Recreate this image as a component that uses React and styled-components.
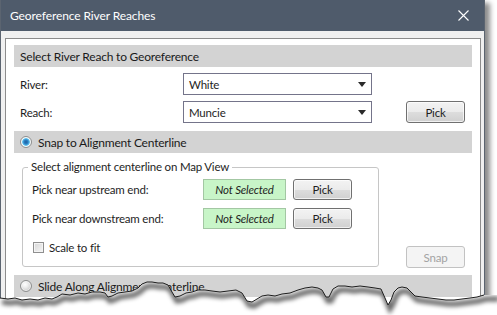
import React from 'react';
import styled, { createGlobalStyle } from 'styled-components';

const GlobalStyle = createGlobalStyle`
  html, body { margin: 0; padding: 0; background: #fff; overflow: hidden; }
  body { font-family: Lato, "Noto Sans", sans-serif; font-size: 11.5px; letter-spacing: -0.2px; color: #1e1e1e; }
`;

const Stage = styled.div`
  position: relative;
  width: 497px;
  height: 315px;
  overflow: hidden;
  background: #fff;
`;

const Window = styled.div`
  width: 485px;
  box-sizing: border-box;
  border: 1px solid #5b6470;
  border-top: none;
  background: #f0f0f0;
  box-shadow: 5px 3px 5px rgba(0, 0, 0, 0.45);
`;

const TitleBar = styled.div`
  height: 31px;
  background: #4f5b6b;
  color: #fff;
  display: flex;
  align-items: center;
  justify-content: space-between;
  padding: 0 15px 0 9px;
  font-size: 12px;
  letter-spacing: -0.1px;
`;

const CloseIcon = () => (
  <svg width="11" height="11" viewBox="0 0 11 11">
    <path d="M0.5 0.5 L10.5 10.5 M10.5 0.5 L0.5 10.5" stroke="#fff" strokeWidth="1.1" />
  </svg>
);

const Body = styled.div`
  padding: 7px 3px 0 4px;
`;

const Panel = styled.div`
  border: 1px solid #8c8c8c;
  background: #fff;
  padding: 6px 8px 40px 8px;
  display: flex;
  flex-direction: column;
`;

const SectionHeader = styled.div`
  height: 22px;
  background: #d3d3d3;
  display: flex;
  align-items: center;
  gap: 6px;
  padding: 0 6px;
  margin-top: ${(p) => p.$mt || 0}px;
  color: #1a1a1a;
  font-size: 12px;
`;

const Radio = styled.span`
  width: 12px;
  height: 12px;
  box-sizing: border-box;
  border-radius: 50%;
  border: 1px solid #8e8f8f;
  background: ${(p) =>
    p.$checked
      ? 'radial-gradient(circle at 50% 50%, #1d5f9c 0, #2a7fc4 2px, #5fc2ee 3.5px, #e8f3f8 4.2px, #f4f4f4 6px)'
      : 'radial-gradient(circle at 40% 35%, #ffffff 0, #ececec 3px, #d2d2d2 6px)'};
  box-shadow: inset 0 0 0 1px rgba(255, 255, 255, 0.6);
`;

const FieldRow = styled.div`
  display: grid;
  grid-template-columns: 169px 189px 34px 59px;
  align-items: center;
  margin-top: 6px;
  height: 22px;
`;

const Label = styled.span`
  padding-left: ${(p) => p.$indent || 0}px;
  color: #1e1e1e;
`;

const Combo = styled.div`
  height: 22px;
  box-sizing: border-box;
  border: 1px solid #74748a;
  background: #fff;
  display: flex;
  align-items: center;
  justify-content: space-between;
  padding: 0 5px 0 5px;
`;

const Arrow = () => (
  <svg width="8" height="5" viewBox="0 0 8 5">
    <path d="M0 0 H8 L4 5 Z" fill="#2a2a2a" />
  </svg>
);

const Button = styled.button`
  grid-column: ${(p) => p.$col || 'auto'};
  width: 59px;
  height: ${(p) => p.$h || 22}px;
  box-sizing: border-box;
  border: 1px solid ${(p) => (p.disabled ? '#c2c2c2' : '#707070')};
  border-radius: 3px;
  background: ${(p) =>
    p.disabled
      ? '#f4f4f4'
      : 'linear-gradient(to bottom, #f3f3f3 0%, #ebebeb 50%, #dddddd 51%, #d0d0d0 100%)'};
  box-shadow: ${(p) => (p.disabled ? 'none' : 'inset 0 0 0 1px rgba(255,255,255,0.7)')};
  font-family: inherit;
  font-size: 11.5px;
  letter-spacing: -0.2px;
  color: ${(p) => (p.disabled ? '#a3a3a3' : '#1e1e1e')};
  padding: 0;
  margin: 0;
`;

const SnapSection = styled.div`
  display: flex;
  margin-top: 7px;
  padding-left: 8px;
`;

const GroupBox = styled.fieldset`
  margin: 0;
  width: 357px;
  box-sizing: border-box;
  padding: 5px 9px 12px 9px;
  border: 1px solid #c6c6c6;
  border-radius: 3px;
  min-width: 0;
`;

const Legend = styled.legend`
  padding: 0 3px;
  margin-left: -4px;
  line-height: 14px;
  font-size: 11.5px;
  color: #1e1e1e;
`;

const PickRow = styled.div`
  display: grid;
  grid-template-columns: 171px 83px 7px 59px;
  align-items: center;
  height: 21px;
  margin-top: ${(p) => p.$mt || 0}px;
`;

const StatusBox = styled.div`
  height: 21px;
  box-sizing: border-box;
  border: 1px solid #a3c7a3;
  background: #c8f5c8;
  display: flex;
  align-items: center;
  justify-content: center;
  font-style: italic;
  color: #1e1e1e;
`;

const CheckRow = styled.label`
  display: flex;
  align-items: center;
  gap: 5px;
  height: 13px;
  margin-top: 12px;
  padding-left: 1px;
`;

const CheckBox = styled.span`
  width: 11px;
  height: 11px;
  box-sizing: border-box;
  border: 1px solid #8f8f8f;
  background: linear-gradient(to bottom right, #d6d6d6, #f6f6f6);
  box-shadow: inset 0 0 0 1px #f4f4f4;
`;

const SideColumn = styled.div`
  display: flex;
  flex-direction: column;
  justify-content: flex-end;
  margin-left: 27px;
  margin-bottom: -1px;
`;

const TornOverlay = styled.svg`
  position: absolute;
  left: 0;
  top: 270px;
  width: 497px;
  height: 45px;
  pointer-events: none;
`;

const edge = [
  [0, 298], [8, 299], [15, 298], [22, 300], [30, 299], [38, 300], [45, 298], [52, 299],
  [57, 297], [62, 294], [70, 295], [78, 293], [85, 294], [92, 292], [100, 292], [105, 293],
  [108, 297], [112, 296], [118, 293], [125, 292], [132, 291], [138, 288], [142, 284],
  [147, 282], [152, 282], [158, 283], [163, 283], [168, 285], [172, 292], [175, 297],
  [180, 296], [186, 293], [192, 292], [198, 290], [205, 290], [212, 291], [220, 292],
  [228, 291], [236, 290], [242, 293], [247, 301], [252, 302], [257, 299], [262, 296],
  [268, 295], [275, 296], [282, 294], [290, 293], [298, 290], [305, 288], [312, 287],
  [318, 288], [322, 290], [326, 297], [329, 297], [333, 289], [338, 286], [345, 286],
  [352, 287], [360, 286], [368, 287], [375, 288], [381, 289], [385, 298], [388, 305],
  [391, 300], [394, 292], [398, 288], [402, 287], [407, 288], [411, 292], [415, 296],
  [422, 297], [430, 298], [438, 299], [446, 300], [454, 300], [462, 299], [470, 298],
  [477, 297], [484, 295],
];

const TornEdge = () => {
  const line = edge.map(([x, y]) => `${x},${y - 270}`).join(' ');
  const fill = `${line} 497,25 497,45 0,45`;
  return (
    <TornOverlay viewBox="0 0 497 45">
      <defs>
        <clipPath id="below">
          <polygon points={fill} />
        </clipPath>
        <filter id="blur" x="-10%" y="-50%" width="120%" height="200%">
          <feGaussianBlur stdDeviation="2.2" />
        </filter>
      </defs>
      <polygon points={fill} fill="#fff" />
      <g clipPath="url(#below)">
        <polyline
          points={`${line} 497,25`}
          fill="none"
          stroke="rgba(0,0,0,0.6)"
          strokeWidth="5"
          transform="translate(2,4)"
          filter="url(#blur)"
        />
      </g>
      <polyline points={line} fill="none" stroke="#1c1c1c" strokeWidth="1" />
    </TornOverlay>
  );
};

export default function App() {
  return (
    <Stage>
      <GlobalStyle />
      <Window>
        <TitleBar>
          <span>Georeference River Reaches</span>
          <CloseIcon />
        </TitleBar>
        <Body>
          <Panel>
            <SectionHeader>Select River Reach to Georeference</SectionHeader>
            <FieldRow>
              <Label $indent={6}>River:</Label>
              <Combo>
                <span>White</span>
                <Arrow />
              </Combo>
            </FieldRow>
            <FieldRow>
              <Label $indent={6}>Reach:</Label>
              <Combo>
                <span>Muncie</span>
                <Arrow />
              </Combo>
              <Button $col="4">Pick</Button>
            </FieldRow>
            <SectionHeader $mt={8}>
              <Radio $checked />
              <span>Snap to Alignment Centerline</span>
            </SectionHeader>
            <SnapSection>
              <GroupBox>
                <Legend>Select alignment centerline on Map View</Legend>
                <PickRow>
                  <Label>Pick near upstream end:</Label>
                  <StatusBox>Not Selected</StatusBox>
                  <Button $col="4" $h={21}>Pick</Button>
                </PickRow>
                <PickRow $mt={8}>
                  <Label>Pick near downstream end:</Label>
                  <StatusBox>Not Selected</StatusBox>
                  <Button $col="4" $h={21}>Pick</Button>
                </PickRow>
                <CheckRow>
                  <CheckBox />
                  <span>Scale to fit</span>
                </CheckRow>
              </GroupBox>
              <SideColumn>
                <Button disabled>Snap</Button>
              </SideColumn>
            </SnapSection>
            <SectionHeader $mt={8}>
              <Radio />
              <span>Slide Along Alignment Centerline</span>
            </SectionHeader>
          </Panel>
        </Body>
      </Window>
      <TornEdge />
    </Stage>
  );
}
